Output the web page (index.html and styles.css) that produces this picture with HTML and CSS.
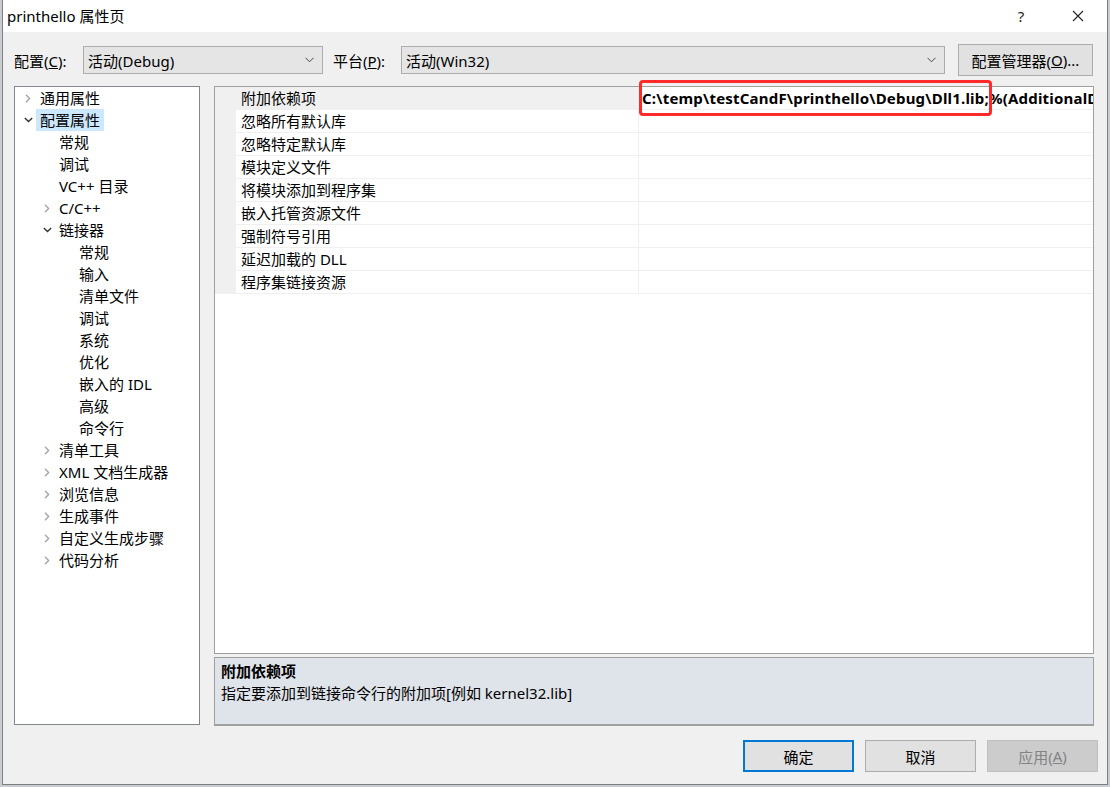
FILE: index.html
```html
<!DOCTYPE html>
<html lang="zh-CN">
<head>
<meta charset="utf-8">
<title>printhello 属性页</title>
<link rel="stylesheet" href="styles.css">
</head>
<body>
<div class="dialog">
  <div class="titlebar">
    <div class="title">printhello 属性页</div>
    <div class="tbtns">
      <div class="tbtn help">?</div>
      <div class="tbtn close">
        <svg width="12" height="12" viewBox="0 0 12 12"><path d="M1 1L11 11M11 1L1 11" stroke="#222" stroke-width="1.1" fill="none"/></svg>
      </div>
    </div>
  </div>

  <div class="content">
    <div class="configrow">
      <div class="lbl lbl-config">配置(<u>C</u>):</div>
      <div class="combo combo-config">
        <span>活动(Debug)</span>
        <svg class="chev" width="9" height="6" viewBox="0 0 9 6"><path d="M0.5 0.8L4.5 4.8L8.5 0.8" stroke="#444" stroke-width="1" fill="none"/></svg>
      </div>
      <div class="lbl lbl-platform">平台(<u>P</u>):</div>
      <div class="combo combo-platform">
        <span>活动(Win32)</span>
        <svg class="chev" width="9" height="6" viewBox="0 0 9 6"><path d="M0.5 0.8L4.5 4.8L8.5 0.8" stroke="#444" stroke-width="1" fill="none"/></svg>
      </div>
      <div class="btn btn-mgr">配置管理器(<u>O</u>)...</div>
    </div>

    <div class="main">
      <div class="tree">
        <div class="node l0"><span class="arr"><svg width="6" height="9" viewBox="0 0 6 9"><path d="M1 0.8L4.6 4.5L1 8.2" stroke="#a6a6a6" stroke-width="1.4" fill="none"/></svg></span><span class="txt">通用属性</span></div>
        <div class="node l0"><span class="arr"><svg width="9" height="6" viewBox="0 0 9 6"><path d="M0.8 1L4.5 4.6L8.2 1" stroke="#333" stroke-width="1.4" fill="none"/></svg></span><span class="txt sel">配置属性</span></div>
        <div class="node l1"><span class="arr"></span><span class="txt">常规</span></div>
        <div class="node l1"><span class="arr"></span><span class="txt">调试</span></div>
        <div class="node l1"><span class="arr"></span><span class="txt">VC++ 目录</span></div>
        <div class="node l1"><span class="arr"><svg width="6" height="9" viewBox="0 0 6 9"><path d="M1 0.8L4.6 4.5L1 8.2" stroke="#a6a6a6" stroke-width="1.4" fill="none"/></svg></span><span class="txt">C/C++</span></div>
        <div class="node l1"><span class="arr"><svg width="9" height="6" viewBox="0 0 9 6"><path d="M0.8 1L4.5 4.6L8.2 1" stroke="#333" stroke-width="1.4" fill="none"/></svg></span><span class="txt">链接器</span></div>
        <div class="node l2"><span class="arr"></span><span class="txt">常规</span></div>
        <div class="node l2"><span class="arr"></span><span class="txt">输入</span></div>
        <div class="node l2"><span class="arr"></span><span class="txt">清单文件</span></div>
        <div class="node l2"><span class="arr"></span><span class="txt">调试</span></div>
        <div class="node l2"><span class="arr"></span><span class="txt">系统</span></div>
        <div class="node l2"><span class="arr"></span><span class="txt">优化</span></div>
        <div class="node l2"><span class="arr"></span><span class="txt">嵌入的 IDL</span></div>
        <div class="node l2"><span class="arr"></span><span class="txt">高级</span></div>
        <div class="node l2"><span class="arr"></span><span class="txt">命令行</span></div>
        <div class="node l1"><span class="arr"><svg width="6" height="9" viewBox="0 0 6 9"><path d="M1 0.8L4.6 4.5L1 8.2" stroke="#a6a6a6" stroke-width="1.4" fill="none"/></svg></span><span class="txt">清单工具</span></div>
        <div class="node l1"><span class="arr"><svg width="6" height="9" viewBox="0 0 6 9"><path d="M1 0.8L4.6 4.5L1 8.2" stroke="#a6a6a6" stroke-width="1.4" fill="none"/></svg></span><span class="txt">XML 文档生成器</span></div>
        <div class="node l1"><span class="arr"><svg width="6" height="9" viewBox="0 0 6 9"><path d="M1 0.8L4.6 4.5L1 8.2" stroke="#a6a6a6" stroke-width="1.4" fill="none"/></svg></span><span class="txt">浏览信息</span></div>
        <div class="node l1"><span class="arr"><svg width="6" height="9" viewBox="0 0 6 9"><path d="M1 0.8L4.6 4.5L1 8.2" stroke="#a6a6a6" stroke-width="1.4" fill="none"/></svg></span><span class="txt">生成事件</span></div>
        <div class="node l1"><span class="arr"><svg width="6" height="9" viewBox="0 0 6 9"><path d="M1 0.8L4.6 4.5L1 8.2" stroke="#a6a6a6" stroke-width="1.4" fill="none"/></svg></span><span class="txt">自定义生成步骤</span></div>
        <div class="node l1"><span class="arr"><svg width="6" height="9" viewBox="0 0 6 9"><path d="M1 0.8L4.6 4.5L1 8.2" stroke="#a6a6a6" stroke-width="1.4" fill="none"/></svg></span><span class="txt">代码分析</span></div>
      </div>

      <div class="rightcol">
        <div class="grid">
          <div class="row selrow"><div class="gut"></div><div class="name">附加依赖项</div><div class="val bold">C:\temp\testCandF\printhello\Debug\Dll1.lib;%(AdditionalD</div></div>
          <div class="row"><div class="gut"></div><div class="name">忽略所有默认库</div><div class="val"></div></div>
          <div class="row"><div class="gut"></div><div class="name">忽略特定默认库</div><div class="val"></div></div>
          <div class="row"><div class="gut"></div><div class="name">模块定义文件</div><div class="val"></div></div>
          <div class="row"><div class="gut"></div><div class="name">将模块添加到程序集</div><div class="val"></div></div>
          <div class="row"><div class="gut"></div><div class="name">嵌入托管资源文件</div><div class="val"></div></div>
          <div class="row"><div class="gut"></div><div class="name">强制符号引用</div><div class="val"></div></div>
          <div class="row"><div class="gut"></div><div class="name">延迟加载的 DLL</div><div class="val"></div></div>
          <div class="row"><div class="gut"></div><div class="name">程序集链接资源</div><div class="val"></div></div>
        </div>
        <div class="desc">
          <div class="desc-title">附加依赖项</div>
          <div class="desc-text">指定要添加到链接命令行的附加项[例如 kernel32.lib]</div>
        </div>
      </div>
    </div>

    <div class="btnrow">
      <div class="btn dbtn ok">确定</div>
      <div class="btn dbtn">取消</div>
      <div class="btn dbtn disabled">应用(<u>A</u>)</div>
    </div>
  </div>
  <div class="redbox"></div>
</div>
</body>
</html>
```

FILE: styles.css
```css
html, body {
  margin: 0;
  padding: 0;
}
body {
  width: 1110px;
  height: 787px;
  background: #c9ccd2;
  font-family: "Noto Sans", "Noto Sans CJK SC", sans-serif;
  font-size: 15px;
  color: #000;
  overflow: hidden;
  position: relative;
}
.dialog {
  position: relative;
  margin-left: 2px;
  width: 1104px;
  height: 784px;
  background: #f0f0f0;
  border: 1px solid #7f7f7f;
  border-top: none;
  display: flex;
  flex-direction: column;
}
.titlebar {
  height: 32px;
  background: #fff;
  display: flex;
  align-items: center;
  justify-content: space-between;
}
.title {
  padding-left: 4px;
  font-size: 15px;
  line-height: 32px;
}
.tbtns {
  display: flex;
  margin-right: 6px;
}
.tbtn {
  width: 46px;
  height: 32px;
  display: flex;
  align-items: center;
  justify-content: center;
}
.tbtn.help {
  margin-right: 11px;
  font-size: 15px;
  color: #222;
}
.content {
  flex: 1;
  display: flex;
  flex-direction: column;
  padding: 12px 9px 0 11px;
}
.configrow {
  display: flex;
  align-items: center;
  height: 32px;
}
.lbl {
  white-space: nowrap;
}
.lbl-config { width: 69px; }
.lbl-platform { width: 68px; margin-left: 10px; }
.combo {
  box-sizing: border-box;
  height: 28px;
  border: 1px solid #adadad;
  background: #e5e5e5;
  display: flex;
  align-items: center;
  justify-content: space-between;
  padding: 0 8px 0 4px;
}
.combo-config { width: 240px; }
.combo-platform { width: 544px; }
.btn {
  box-sizing: border-box;
  border: 1px solid #adadad;
  background: #e1e1e1;
  display: flex;
  align-items: center;
  justify-content: center;
  white-space: nowrap;
}
.btn-mgr {
  width: 135px;
  height: 32px;
  margin-left: 13px;
}
.main {
  display: flex;
  margin-top: 10px;
  height: 640px;
}
.tree {
  box-sizing: border-box;
  width: 186px;
  height: 639px;
  border: 1px solid #82878f;
  background: #fff;
}
.node {
  height: 22px;
  display: flex;
  align-items: center;
  white-space: nowrap;
}
.node.l0 { padding-left: 5px; }
.node.l1 { padding-left: 24px; }
.node.l2 { padding-left: 44px; }
.arr {
  width: 20px;
  height: 22px;
  display: flex;
  align-items: center;
  justify-content: center;
  flex: none;
  padding-right: 4px;
  box-sizing: border-box;
}
.txt {
  line-height: 22px;
}
.txt.sel {
  background: #cce8ff;
  padding: 0 4px;
  margin-left: -4px;
}
.rightcol {
  margin-left: 14px;
  width: 880px;
  display: flex;
  flex-direction: column;
}
.grid {
  box-sizing: border-box;
  height: 568px;
  border: 1px solid #a0a0a0;
  background: #fff;
  overflow: hidden;
}
.row {
  display: flex;
  height: 23px;
  box-sizing: border-box;
  border-bottom: 1px solid #f0f0f0;
}
.gut {
  width: 21px;
  flex: none;
  background: #f0f0f0;
}
.name {
  box-sizing: border-box;
  width: 403px;
  flex: none;
  padding-left: 5px;
  line-height: 22px;
  border-right: 1px solid #f0f0f0;
  white-space: nowrap;
}
.selrow .name {
  background: #f0f0f0;
}
.val {
  flex: 1;
  min-width: 0;
  padding-left: 3px;
  line-height: 22px;
  white-space: nowrap;
  overflow: hidden;
}
.val.bold {
  font-weight: bold;
  letter-spacing: 0.2px;
}
.desc {
  box-sizing: border-box;
  margin-top: 3px;
  height: 69px;
  background: #dfe3ea;
  border-top: 1px solid #a0a0a0;
  border-left: 1px solid #a0a0a0;
  border-right: 1px solid #a0a0a0;
  border-bottom: 2px solid #a0a0a0;
  padding: 2px 6px;
}
.desc-title {
  font-weight: bold;
  line-height: 22px;
}
.desc-text {
  line-height: 22px;
}
.btnrow {
  display: flex;
  justify-content: flex-end;
  margin-top: 14px;
}
.dbtn {
  width: 111px;
  height: 32px;
  margin-left: 11px;
}
.dbtn.ok {
  border: 2px solid #0078d7;
}
.dbtn.disabled {
  background: #cccccc;
  border-color: #bfbfbf;
  color: #838383;
}
.redbox {
  position: absolute;
  left: 636px;
  top: 80px;
  width: 347px;
  height: 30px;
  border: 3px solid #ff2a2a;
  border-radius: 4px;
}
```
